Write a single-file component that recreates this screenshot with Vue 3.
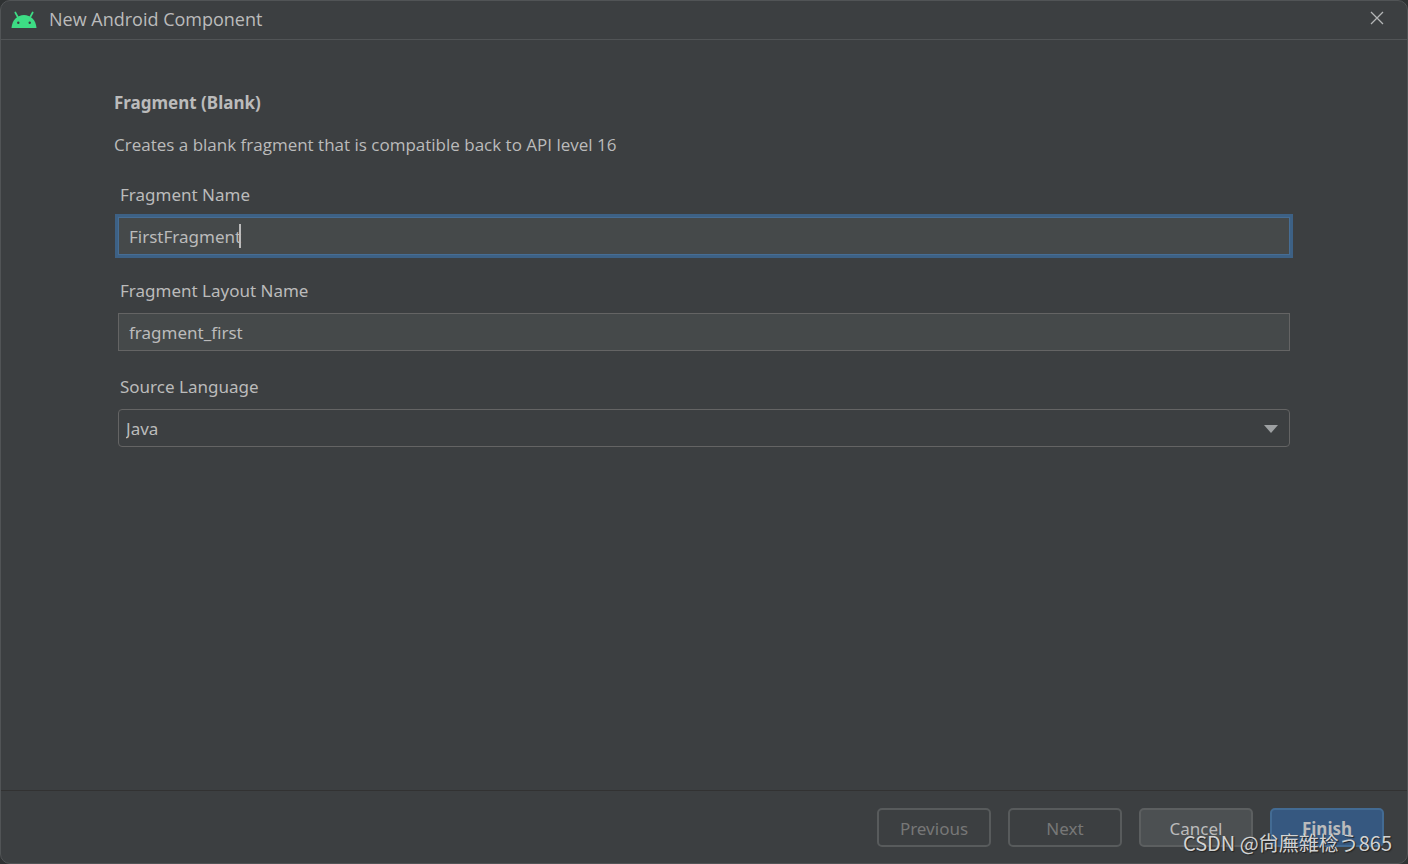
<script setup>
import { ref, onMounted } from 'vue';

const fragmentName = ref('FirstFragment');
const layoutName = ref('fragment_first');
const language = ref('Java');
const nameInput = ref(null);

onMounted(() => {
  // Put the caret at the end of the first field
  const end = fragmentName.value.length;
  nameInput.value.focus();
  nameInput.value.setSelectionRange(end, end);
});
</script>

<template>
  <div class="dialog">
    <header class="title-bar">
      <svg class="logo" width="26" height="18" viewBox="0 0 26 18">
        <path d="M4.300 1.500 L7 6.500 M21.700 1.500 L19 6.500" stroke="#3ddc84" stroke-width="1.700" stroke-linecap="round" />
        <path d="M0.500 17 C1 9 6.500 4 13 4 S25 9 25.500 17 Z" fill="#3ddc84" />
        <circle cx="7.300" cy="11.700" r="1.200" fill="#3c3f41" />
        <circle cx="18.700" cy="11.700" r="1.200" fill="#3c3f41" />
      </svg>
      <h1 class="title">New Android Component</h1>
      <button class="close" type="button" aria-label="Close">
        <svg width="14" height="14" viewBox="0 0 14 14">
          <path d="M1 1 L13 13 M13 1 L1 13" stroke="#b4b6b7" stroke-width="1.300" />
        </svg>
      </button>
    </header>

    <main class="content">
      <h2 class="heading">Fragment (Blank)</h2>
      <p class="description">Creates a blank fragment that is compatible back to API level 16</p>

      <div class="field">
        <label for="fragment-name">Fragment Name</label>
        <div class="name-box">
          <input id="fragment-name" ref="nameInput" v-model="fragmentName" class="control" type="text" spellcheck="false" />
          <div class="caret-track" aria-hidden="true">
            <span class="caret-space">{{ fragmentName }}</span><span class="caret"></span>
          </div>
        </div>
      </div>

      <div class="field">
        <label for="layout-name">Fragment Layout Name</label>
        <input id="layout-name" v-model="layoutName" class="control" type="text" spellcheck="false" />
      </div>

      <div class="field">
        <label for="language">Source Language</label>
        <div class="select-box">
          <select id="language" v-model="language" class="control">
            <option>Java</option>
            <option>Kotlin</option>
          </select>
          <svg class="arrow" width="14" height="8" viewBox="0 0 14 8">
            <path d="M0 0 H14 L7 8 Z" fill="#9da0a2" />
          </svg>
        </div>
      </div>
    </main>

    <footer class="actions">
      <button class="button" type="button" disabled>Previous</button>
      <button class="button" type="button" disabled>Next</button>
      <button class="button normal" type="button">Cancel</button>
      <button class="button primary" type="button">Finish</button>
    </footer>

    <div class="watermark">CSDN @尙廡雜棯う865</div>
  </div>
</template>

<style>
body {
  background: #2f3233;
}
</style>

<style scoped>
.dialog {
  position: relative;
  display: flex;
  flex-direction: column;
  box-sizing: border-box;
  min-height: 100vh;
  border: 1px solid #515456;
  border-radius: 10px;
  background: #3c3f41;
  color: #bbbbbb;
  font-family: "Noto Sans", "Noto Sans CJK SC", sans-serif;
  font-size: 17px;
  line-height: 24px;
}

.title-bar {
  display: flex;
  align-items: center;
  height: 38px;
  padding: 0 23px 0 10px;
  border-bottom: 1px solid #515456;
}

.title {
  flex: 1;
  margin: 0 0 0 12px;
  padding-bottom: 2px;
  font-family: "Open Sans", sans-serif;
  font-size: 18px;
  font-weight: 400;
}

.close {
  display: flex;
  padding: 0 0 4px;
  border: none;
  background: none;
  cursor: pointer;
}

.content {
  flex: 1;
  padding: 51px 114px 0 113px;
}

.heading {
  margin: 0;
  font-size: 17px;
  font-weight: 700;
}

.description {
  margin: 18px 0 26px;
  font-family: "Open Sans", sans-serif;
}

.field {
  margin: 0 3px 24px 4px;
}

.field label {
  display: block;
  margin: 0 0 10px 2px;
}

.control {
  display: block;
  box-sizing: border-box;
  width: 100%;
  height: 38px;
  padding: 0 10px;
  border: 1px solid #646464;
  border-radius: 0;
  outline: none;
  background: #45494a;
  color: #bbbbbb;
  font: inherit;
}

.name-box,
.select-box {
  position: relative;
}

.name-box .control {
  border-color: #466d94;
  box-shadow: 0 0 0 3px #3d6185;
  caret-color: transparent;
}

/* Wide caret drawn after the typed text */
.caret-track {
  position: absolute;
  inset: 0 11px;
  display: flex;
  align-items: center;
  overflow: hidden;
  pointer-events: none;
}

.caret-space {
  visibility: hidden;
}

.caret {
  width: 2px;
  height: 24px;
  margin-left: -2px;
  background: #bbbbbb;
}

select.control {
  padding: 2px 7px 0;
  border-radius: 4px;
  background: #3c3f41;
  appearance: none;
}

.arrow {
  position: absolute;
  top: 16px;
  right: 12px;
  pointer-events: none;
}

.actions {
  display: flex;
  justify-content: flex-end;
  gap: 17px;
  padding: 17px 23px 16px;
  border-top: 1px solid #323232;
}

.button {
  box-sizing: border-box;
  width: 114px;
  height: 39px;
  padding: 2px 0 0;
  border: 2px solid #585b5c;
  border-radius: 5px;
  background: #3c3f41;
  color: #777777;
  font: inherit;
}

.button.normal {
  border-color: #5c5f60;
  background: #4c5052;
  color: #bbbbbb;
}

.button.primary {
  border-color: #436b93;
  background: #365880;
  color: #bbbbbb;
  font-weight: 700;
}

.watermark {
  position: absolute;
  right: 15px;
  bottom: 8px;
  color: #d2d3d3;
  font-family: "Noto Sans CJK SC", sans-serif;
  font-size: 20px;
  text-shadow: 1px 1px 1px #222222;
  pointer-events: none;
}
</style>
